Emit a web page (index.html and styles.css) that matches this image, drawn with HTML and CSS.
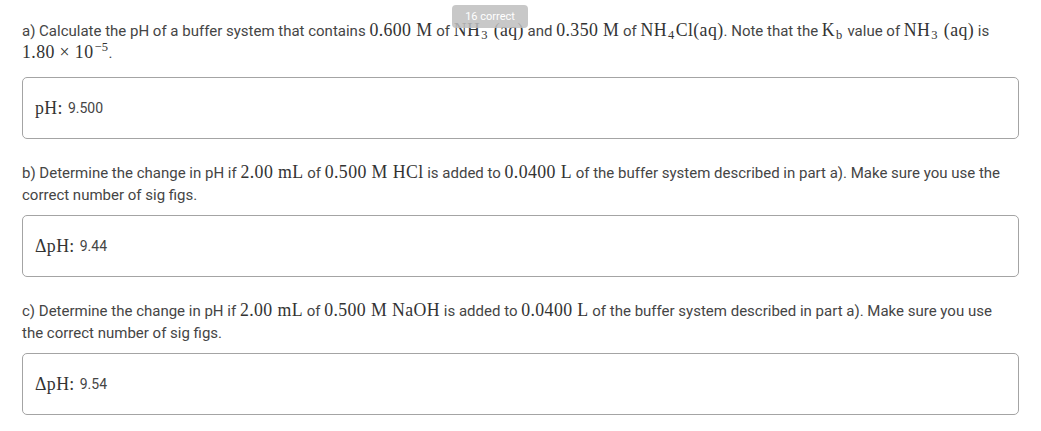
FILE: index.html
```html
<!DOCTYPE html>
<html>
<head>
<meta charset="utf-8">
<link rel="stylesheet" href="styles.css">
</head>
<body>
<div class="page">
  <div class="badge">16 correct</div>
  <p class="q q-first">a) Calculate the pH of a buffer system that contains <span class="m">0.600 M</span> of <span class="m">NH<sub>3</sub> (aq)</span> and <span class="m">0.350 M</span> of <span class="m">NH<sub>4</sub>Cl(aq)</span>. Note that the <span class="m">K<sub>b</sub></span> value of <span class="m">NH<sub>3</sub> (aq)</span> is <span class="m">1.80 × 10<sup>−5</sup></span>.</p>
  <div class="answer"><span class="m">pH:</span> 9.500</div>
  <p class="q">b) Determine the change in pH if <span class="m">2.00 mL</span> of <span class="m">0.500 M HCl</span> is added to <span class="m">0.0400 L</span> of the buffer system described in part a). Make sure you use the correct number of sig figs.</p>
  <div class="answer"><span class="m">ΔpH:</span> 9.44</div>
  <p class="q">c) Determine the change in pH if <span class="m">2.00 mL</span> of <span class="m">0.500 M NaOH</span> is added to <span class="m">0.0400 L</span> of the buffer system described in part a). Make sure you use the correct number of sig figs.</p>
  <div class="answer"><span class="m">ΔpH:</span> 9.54</div>
</div>
</body>
</html>
```
FILE: styles.css
```css
html, body {
  margin: 0;
  padding: 0;
  background: #ffffff;
}
.page {
  position: relative;
  padding: 0 22px 0 22px;
  font-family: Roboto, "Liberation Sans", sans-serif;
  font-size: 15px;
  color: #454545;
}
.q {
  margin: 0;
  padding-top: 23px;
  padding-right: 10px;
  padding-bottom: 9px;
  line-height: 22px;
}
.q-first {
  padding-top: 20px;
  padding-bottom: 13px;
}
.m {
  font-family: "Liberation Serif", "DejaVu Serif", serif;
  font-size: 17.8px;
  letter-spacing: 0.4px;
  line-height: 14px;
  white-space: nowrap;
  color: #333333;
}
.m sub {
  font-size: 12.5px;
  vertical-align: -3px;
  line-height: 0;
  margin: 0 1px;
}
.m sup {
  font-size: 12.5px;
  vertical-align: 7px;
  line-height: 0;
  margin-left: 1px;
}
.answer {
  height: 60px;
  border: 1px solid #a4a4a4;
  border-radius: 5px;
  padding: 0 12px;
  display: flex;
  align-items: center;
  gap: 5px;
  font-size: 14px;
  color: #454545;
}
.badge {
  position: absolute;
  z-index: 1;
  left: 452px;
  top: 5px;
  width: 76px;
  height: 23px;
  border-radius: 4px;
  background: rgba(190, 190, 190, 0.85);
  color: #ffffff;
  font-size: 11px;
  text-align: center;
  line-height: 23px;
}
```
